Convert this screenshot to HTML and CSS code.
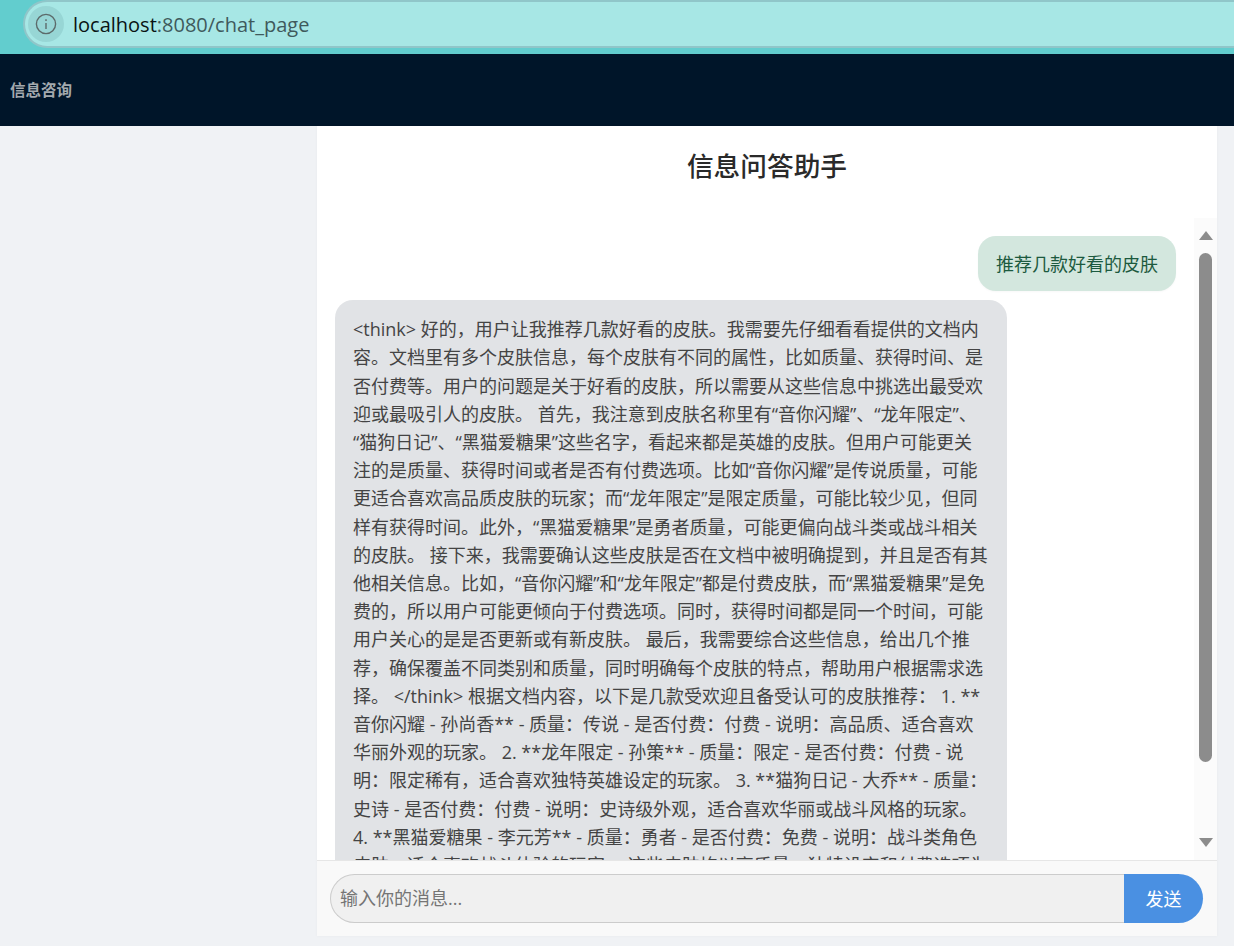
FILE: index.html
```html
<!DOCTYPE html>
<html lang="zh">

<head>
    <meta charset="UTF-8">
    <title>信息咨询</title>
    <link rel="stylesheet" href="styles.css">
</head>

<body>
    <!-- 浏览器地址栏 -->
    <div class="browser-bar">
        <div class="url-pill">
            <span class="info-chip">
                <svg width="22" height="22" viewBox="0 0 22 22" fill="none" stroke="#5c6a6a" stroke-width="1.4">
                    <circle cx="11" cy="11" r="9.6"></circle>
                    <path d="M11 10v6"></path>
                    <path d="M11 6.2v1.8"></path>
                </svg>
            </span>
            <span class="url"><span class="url-host">localhost</span>:8080/chat_page</span>
        </div>
    </div>

    <!-- 顶部导航 -->
    <nav class="navbar">
        <a class="nav-link">信息咨询</a>
    </nav>

    <div class="main">
        <aside class="side"></aside>

        <section class="chat">
            <header class="chat-header">
                <h1>信息问答助手</h1>
            </header>

            <div class="chat-body">
                <div class="messages">
                    <div class="msg msg-user">推荐几款好看的皮肤</div>
                    <div class="msg msg-bot">
                        &lt;think&gt; 好的，用户让我推荐几款好看的皮肤。我需要先仔细看看提供的文档内<br>
                        容。文档里有多个皮肤信息，每个皮肤有不同的属性，比如质量、获得时间、是<br>
                        否付费等。用户的问题是关于好看的皮肤，所以需要从这些信息中挑选出最受欢<br>
                        迎或最吸引人的皮肤。 首先，我注意到皮肤名称里有“音你闪耀”、“龙年限定”、<br>
                        “猫狗日记”、“黑猫爱糖果”这些名字，看起来都是英雄的皮肤。但用户可能更关<br>
                        注的是质量、获得时间或者是否有付费选项。比如“音你闪耀”是传说质量，可能<br>
                        更适合喜欢高品质皮肤的玩家；而“龙年限定”是限定质量，可能比较少见，但同<br>
                        样有获得时间。此外，“黑猫爱糖果”是勇者质量，可能更偏向战斗类或战斗相关<br>
                        的皮肤。 接下来，我需要确认这些皮肤是否在文档中被明确提到，并且是否有其<br>
                        他相关信息。比如，“音你闪耀”和“龙年限定”都是付费皮肤，而“黑猫爱糖果”是免<br>
                        费的，所以用户可能更倾向于付费选项。同时，获得时间都是同一个时间，可能<br>
                        用户关心的是是否更新或有新皮肤。 最后，我需要综合这些信息，给出几个推<br>
                        荐，确保覆盖不同类别和质量，同时明确每个皮肤的特点，帮助用户根据需求选<br>
                        择。 &lt;/think&gt; 根据文档内容，以下是几款受欢迎且备受认可的皮肤推荐： 1. **<br>
                        音你闪耀 - 孙尚香** - 质量：传说 - 是否付费：付费 - 说明：高品质、适合喜欢<br>
                        华丽外观的玩家。 2. **龙年限定 - 孙策** - 质量：限定 - 是否付费：付费 - 说<br>
                        明：限定稀有，适合喜欢独特英雄设定的玩家。 3. **猫狗日记 - 大乔** - 质量：<br>
                        史诗 - 是否付费：付费 - 说明：史诗级外观，适合喜欢华丽或战斗风格的玩家。<br>
                        4. **黑猫爱糖果 - 李元芳** - 质量：勇者 - 是否付费：免费 - 说明：战斗类角色<br>
                        皮肤，适合喜欢战斗体验的玩家。 这些皮肤均以高质量、独特设定和付费选项为
                    </div>
                </div>

                <!-- 滚动条 -->
                <div class="scroll-track">
                    <span class="arrow-up"></span>
                    <span class="scroll-thumb"></span>
                    <span class="arrow-down"></span>
                </div>
            </div>

            <form class="input-bar">
                <input class="msg-input" type="text" placeholder="输入你的消息...">
                <button class="send-btn" type="button">发送</button>
            </form>
        </section>
    </div>
</body>

</html>
```
FILE: styles.css
```css
* {
    box-sizing: border-box;
}

body,
html {
    margin: 0;
    padding: 0;
    height: 100%;
    overflow: hidden;
    background-color: #f0f2f5;
    font-family: 'Open Sans', 'Noto Sans CJK SC', sans-serif;
}

.browser-bar {
    height: 54px;
    padding: 0 0 6px 23px;
    background-color: #62cdce;
}

.url-pill {
    height: 48px;
    display: flex;
    align-items: center;
    padding-left: 3px;
    background-color: #a7e7e5;
    border: solid #90c6c9;
    border-width: 2px 0 2px 2px;
    border-radius: 24px 0 0 24px;
}

.info-chip {
    width: 36px;
    height: 36px;
    display: flex;
    justify-content: center;
    align-items: center;
    background-color: #97d6d5;
    border-radius: 50%;
}

.url {
    margin-left: 9px;
    font-family: 'Open Sans', sans-serif;
    font-size: 20px;
    color: #3f5a5c;
}

.url-host {
    color: #0a1414;
}

.navbar {
    height: 72px;
    display: flex;
    align-items: center;
    padding: 0 0 2px 10px;
    background-color: #001529;
}

.nav-link {
    font-size: 15.5px;
    font-weight: 700;
    color: #a3a9ae;
}

.main {
    display: flex;
    height: 810px;
}

.side {
    width: 317px;
}

.chat {
    width: 900px;
    display: flex;
    flex-direction: column;
    background-color: white;
    box-shadow: 0 0 3px rgba(0, 0, 0, 0.04);
}

.chat-header {
    height: 92px;
    padding-top: 20px;
    text-align: center;
}

.chat-header h1 {
    margin: 0;
    font-size: 26.7px;
    font-weight: 500;
    line-height: 40px;
    color: #2a2a2a;
}

.chat-body {
    flex: 1;
    min-height: 0;
    display: flex;
}

.messages {
    flex: 1;
    min-width: 0;
    overflow: hidden;
    display: flex;
    flex-direction: column;
    gap: 9px;
    padding: 18px 18px 0;
}

.msg {
    font-size: 18px;
    line-height: 28.2px;
    padding: 13.5px 18px;
    border-radius: 18px;
    white-space: nowrap;
}

.msg-user {
    align-self: flex-end;
    background-color: #d3e7de;
    color: #1c5a3e;
    box-shadow: 0 1px 2px rgba(0, 0, 0, 0.03);
}

.msg-bot {
    align-self: flex-start;
    flex-shrink: 0;
    width: 672px;
    padding-top: 15px;
    background-color: #e1e3e6;
    color: #444;
}

.scroll-track {
    width: 23px;
    display: flex;
    flex-direction: column;
    align-items: center;
    padding-top: 13px;
    background-color: #fbfbfb;
}

.arrow-up,
.arrow-down {
    width: 0;
    height: 0;
    border-left: 7.5px solid transparent;
    border-right: 7.5px solid transparent;
}

.arrow-up {
    border-bottom: 9px solid #8c8c8c;
}

.arrow-down {
    margin-top: 76px;
    border-top: 9px solid #8c8c8c;
}

.scroll-thumb {
    width: 13px;
    height: 509px;
    margin-top: 13px;
    background-color: #8c8c8c;
    border-radius: 7px;
}

.input-bar {
    height: 76px;
    display: flex;
    align-items: flex-start;
    padding: 13px 14px 0 13px;
    background-color: #f9f9f9;
    border-top: 1px solid #e6e6e6;
    margin: 0;
}

.msg-input {
    flex: 1;
    height: 49px;
    padding: 0 9px 2px;
    font-family: 'Open Sans', 'Noto Sans CJK SC', sans-serif;
    font-size: 18px;
    background-color: #f0f0f0;
    border: 1px solid #ccc;
    border-right: none;
    border-radius: 25px 0 0 25px;
    outline: none;
}

.msg-input::placeholder {
    color: #757575;
}

.send-btn {
    width: 79px;
    height: 49px;
    padding: 0 0 2px;
    font-family: 'Open Sans', 'Noto Sans CJK SC', sans-serif;
    font-size: 18px;
    color: white;
    background-color: #4a90e2;
    border: none;
    border-radius: 0 25px 25px 0;
    cursor: pointer;
}
```
